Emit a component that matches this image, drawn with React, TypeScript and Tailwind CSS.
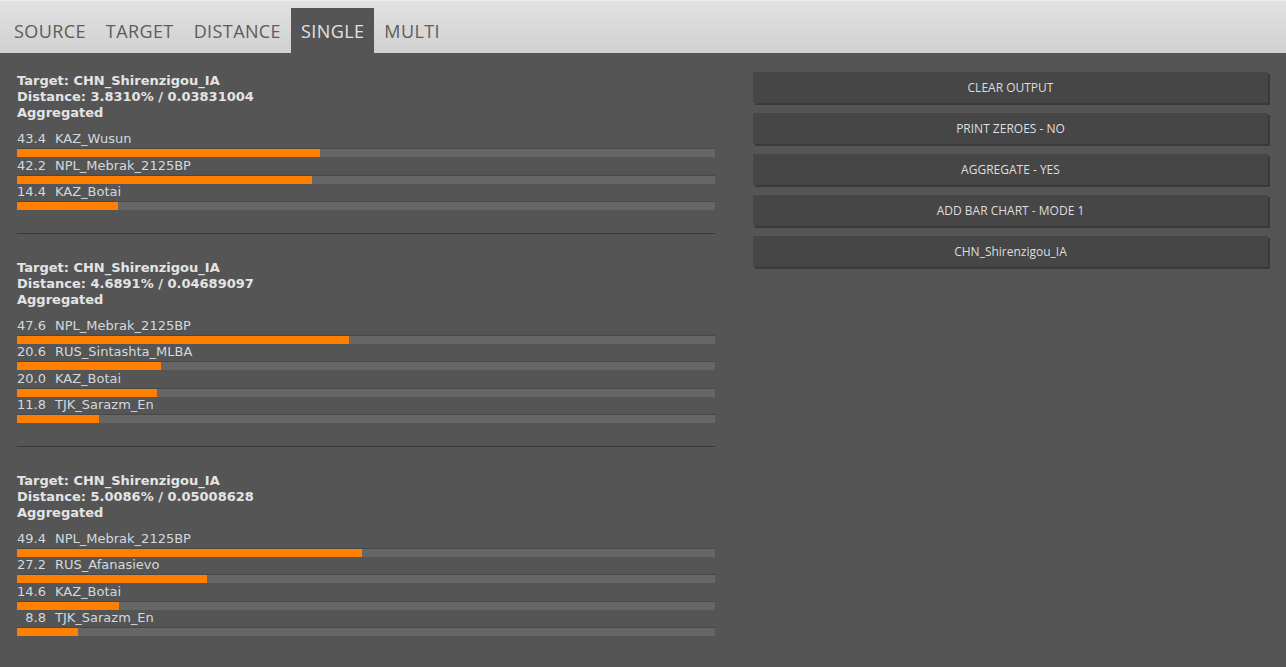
import React from 'react';

type Row = { value: number; name: string };
type Result = { target: string; distance: string; rows: Row[] };

const tabs = ['SOURCE', 'TARGET', 'DISTANCE', 'SINGLE', 'MULTI'];

const results: Result[] = [
  {
    target: 'CHN_Shirenzigou_IA',
    distance: '3.8310% / 0.03831004',
    rows: [
      { value: 43.4, name: 'KAZ_Wusun' },
      { value: 42.2, name: 'NPL_Mebrak_2125BP' },
      { value: 14.4, name: 'KAZ_Botai' },
    ],
  },
  {
    target: 'CHN_Shirenzigou_IA',
    distance: '4.6891% / 0.04689097',
    rows: [
      { value: 47.6, name: 'NPL_Mebrak_2125BP' },
      { value: 20.6, name: 'RUS_Sintashta_MLBA' },
      { value: 20.0, name: 'KAZ_Botai' },
      { value: 11.8, name: 'TJK_Sarazm_En' },
    ],
  },
  {
    target: 'CHN_Shirenzigou_IA',
    distance: '5.0086% / 0.05008628',
    rows: [
      { value: 49.4, name: 'NPL_Mebrak_2125BP' },
      { value: 27.2, name: 'RUS_Afanasievo' },
      { value: 14.6, name: 'KAZ_Botai' },
      { value: 8.8, name: 'TJK_Sarazm_En' },
    ],
  },
];

const buttons = [
  'CLEAR OUTPUT',
  'PRINT ZEROES - NO',
  'AGGREGATE - YES',
  'ADD BAR CHART - MODE 1',
  'CHN_Shirenzigou_IA',
];

function ResultBlock({ result, last }: { result: Result; last: boolean }) {
  return (
    <div className={last ? '' : 'border-b border-[#3a3a3a] pb-[22px] mb-[26px]'}>
      <div className="font-bold text-[13px] leading-[16px] text-[#e4e4e4]">
        <div>Target: {result.target}</div>
        <div>Distance: {result.distance}</div>
        <div>Aggregated</div>
      </div>
      <div className="mt-[10px]">
        {result.rows.map((row) => (
          <div key={row.name} className="h-[26.5px]">
            <div className="flex text-[13px] leading-[16px] text-[#d3d9de]">
              <span className="w-[29px] text-right">{row.value.toFixed(1)}</span>
              <span className="ml-[9px]">{row.name}</span>
            </div>
            <div className="mt-[1px] h-[9px] border-t border-[#484848] bg-[#666666]">
              <div className="h-full bg-[#ff8000]" style={{ width: `${row.value}%` }} />
            </div>
          </div>
        ))}
      </div>
    </div>
  );
}

export default function App() {
  return (
    <div className="min-h-screen bg-[#555555] font-['DejaVu_Sans',sans-serif]">
      <div className="h-[53px] flex items-end pl-[4px] bg-gradient-to-b from-[#e2e2e2] to-[#d0d0d0] border-t border-[#ececec] font-['Open_Sans',sans-serif]">
        {tabs.map((tab) => (
          <div
            key={tab}
            className={
              'h-[45px] px-[10px] pt-[2px] flex items-center text-[18px] tracking-[0.4px] ' +
              (tab === 'SINGLE' ? 'bg-[#555555] text-[#e2e2e2]' : 'text-[#5c5c5c]')
            }
          >
            {tab}
          </div>
        ))}
      </div>

      <div className="grid grid-cols-[698px_517px] gap-[38px] pl-[17px] pt-[18px]">
        <div className="pt-[2px]">
          {results.map((r, i) => (
            <ResultBlock key={i} result={r} last={i === results.length - 1} />
          ))}
        </div>
        <div className="flex flex-col gap-[10px] pt-[1px]">
          {buttons.map((b) => (
            <div
              key={b}
              className="h-[31px] mr-[2px] flex items-center justify-center bg-[#464646] shadow-[2px_2px_0_#3a3a3a] text-[12px] text-[#dedede] font-['Open_Sans',sans-serif]"
            >
              {b}
            </div>
          ))}
        </div>
      </div>
    </div>
  );
}
